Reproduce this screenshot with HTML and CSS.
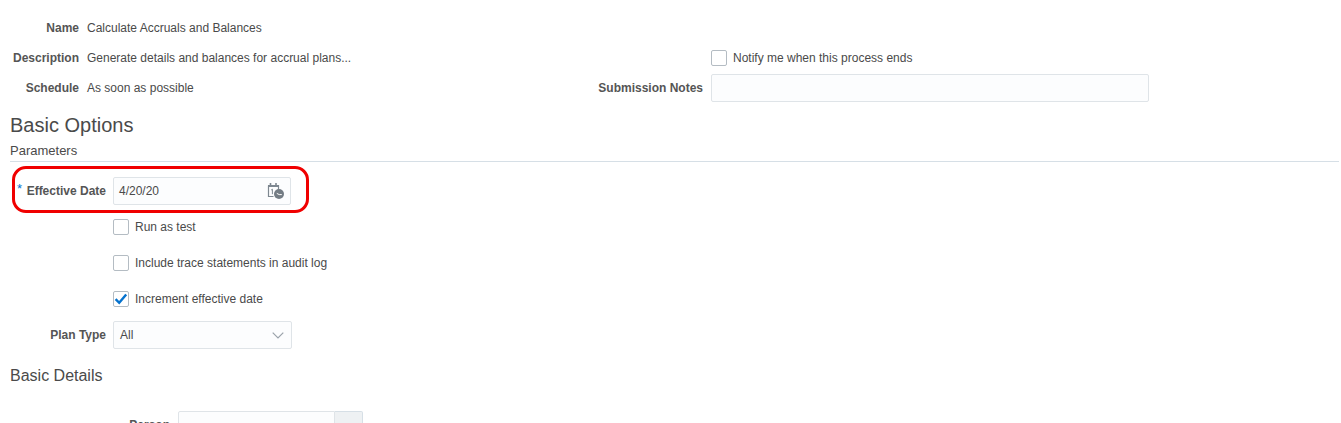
FILE: index.html
```html
<!DOCTYPE html>
<html lang="en">
<head>
    <meta charset="UTF-8">
    <title>Calculate Accruals and Balances</title>
    <link rel="stylesheet" href="styles.css">
</head>
<body>
    <div class="summary">
        <span class="label">Name</span>
        <span class="value">Calculate Accruals and Balances</span>
        <span></span>
        <span></span>

        <span class="label">Description</span>
        <span class="value">Generate details and balances for accrual plans...</span>
        <span></span>
        <label class="check-line">
            <span class="checkbox"></span>
            <span>Notify me when this process ends</span>
        </label>

        <span class="label">Schedule</span>
        <span class="value">As soon as possible</span>
        <span class="label">Submission Notes</span>
        <div class="field notes"></div>
    </div>

    <h1 class="page-title">Basic Options</h1>
    <div class="sub-title">Parameters</div>

    <div class="form">
        <div class="highlight"></div>

        <div class="form-row">
            <span class="label form-label"><span class="required">*</span>Effective Date</span>
            <div class="field date-field">
                <span>4/20/20</span>
                <svg class="date-icon" width="18" height="18" viewBox="0 0 18 18">
                    <path d="M1.5 3.5h10v4M1.5 3.5v11h5" fill="none" stroke="#7d8790" stroke-width="1.2"/>
                    <path d="M1 3h11v2H1z" fill="#7d8790"/>
                    <path d="M3.5 1v3M9 1v3" stroke="#7d8790" stroke-width="1.6"/>
                    <path d="M4.2 8l1.2-.8v5" fill="none" stroke="#7d8790" stroke-width="1"/>
                    <circle cx="12" cy="12" r="5" fill="#737c84"/>
                    <path d="M9.8 11.4l2.4 1.2h2.6" fill="none" stroke="#fff" stroke-width="1"/>
                </svg>
            </div>
        </div>

        <div class="form-row">
            <span class="form-label"></span>
            <label class="check-line">
                <span class="checkbox"></span>
                <span>Run as test</span>
            </label>
        </div>

        <div class="form-row">
            <span class="form-label"></span>
            <label class="check-line">
                <span class="checkbox"></span>
                <span>Include trace statements in audit log</span>
            </label>
        </div>

        <div class="form-row">
            <span class="form-label"></span>
            <label class="check-line">
                <span class="checkbox">
                    <svg width="16" height="16" viewBox="0 0 16 16">
                        <path d="M2.6 8.2l3.6 3.6 7-8.4" fill="none" stroke="#0572ce" stroke-width="2.4"/>
                    </svg>
                </span>
                <span>Increment effective date</span>
            </label>
        </div>

        <div class="form-row">
            <span class="label form-label">Plan Type</span>
            <div class="field select-field">
                <span>All</span>
                <svg width="12" height="7" viewBox="0 0 12 7">
                    <path d="M.7.7L6 6l5.3-5.3" fill="none" stroke="#9aa3ab" stroke-width="1.2"/>
                </svg>
            </div>
        </div>
    </div>

    <h2 class="section-title">Basic Details</h2>

    <div class="person-row">
        <span class="label person-label">Person</span>
        <div class="field person-input"></div>
        <div class="person-btn"></div>
    </div>
</body>
</html>
```

FILE: styles.css
```css
html {
    height: 423px;
    overflow: hidden;
}
body {
    font-family: 'Liberation Sans', Arial, sans-serif;
    font-size: 12px;
    background-color: #fff;
    color: #4a4a4a;
    margin: 0;
    padding: 13px 0 0;
}
.summary {
    display: grid;
    grid-template-columns: 79px 500px 108px 438px;
    grid-auto-rows: 30px;
    column-gap: 8px;
    align-items: center;
}
.label {
    font-weight: bold;
    color: #555;
    text-align: right;
    white-space: nowrap;
}
.value {
    white-space: nowrap;
}
.field {
    box-sizing: border-box;
    background-color: #fcfdfe;
    border: 1px solid #dfe4e8;
    border-radius: 2px;
}
.notes {
    height: 28px;
}
.check-line {
    display: flex;
    align-items: center;
    gap: 6px;
}
.checkbox {
    box-sizing: border-box;
    width: 16px;
    height: 16px;
    background-color: #fff;
    border: 1px solid #b4bcc3;
    border-radius: 2px;
}
.checkbox svg {
    display: block;
    margin: -1px;
}
.page-title {
    font-size: 20px;
    font-weight: normal;
    line-height: 24px;
    color: #4a4a4a;
    margin: 10px 0 0 10px;
}
.sub-title {
    font-size: 13px;
    line-height: 16px;
    color: #4a4a4a;
    margin: 6px 2px 0 10px;
    padding-bottom: 3px;
    border-bottom: 1px solid #d6dfe6;
    height: 15px;
}
.form {
    position: relative;
    margin-top: 11px;
}
.highlight {
    position: absolute;
    left: 12px;
    top: -7px;
    width: 291px;
    height: 41px;
    border: 3px solid #f00000;
    border-radius: 14px;
}
.form-row {
    display: flex;
    align-items: center;
    gap: 7px;
    height: 36px;
}
.form-label {
    position: relative;
    width: 106px;
    flex: none;
}
.required {
    position: absolute;
    left: 17px;
    top: -3px;
    color: #0572ce;
    font-weight: normal;
    font-size: 13px;
}
.date-field {
    display: flex;
    align-items: center;
    justify-content: space-between;
    width: 178px;
    height: 28px;
    padding: 0 5px;
}
.date-icon {
    display: block;
}
.select-field {
    display: flex;
    align-items: center;
    justify-content: space-between;
    width: 179px;
    height: 28px;
    padding: 0 7px 0 6px;
}
.section-title {
    font-size: 16px;
    font-weight: normal;
    line-height: 20px;
    color: #4a4a4a;
    margin: 13px 0 0 10px;
}
.person-row {
    display: flex;
    align-items: center;
    margin-top: 25px;
    height: 28px;
}
.person-label {
    width: 170px;
    margin-right: 8px;
}
.person-input {
    width: 157px;
    height: 28px;
    border-radius: 2px 0 0 2px;
}
.person-btn {
    box-sizing: border-box;
    width: 28px;
    height: 28px;
    background-color: #eef1f3;
    border: 1px solid #d6dfe6;
    border-left: 0;
    border-radius: 0 2px 2px 0;
}
```
